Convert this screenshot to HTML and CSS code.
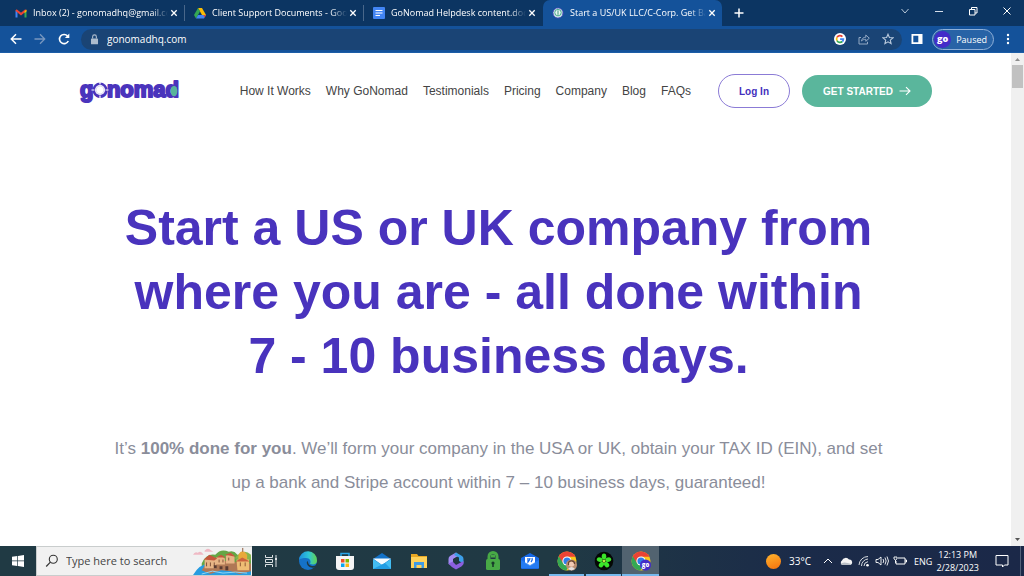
FILE: index.html
```html
<!DOCTYPE html>
<html lang="en">
<head>
<meta charset="utf-8">
<title>Start a US/UK LLC/C-Corp. Get Banking</title>
<link rel="stylesheet" href="styles.css">
</head>
<body>
<svg class="defs" aria-hidden="true">
  <defs>
    <symbol id="chrome" viewBox="0 0 20 20">
      <circle cx="10" cy="10" r="9.5" fill="#fbc91c"/>
      <path d="M10 10 1.8 5.2A9.5 9.5 0 0 0 9.3 19.5L13.5 12Z" fill="#34a853"/>
      <path d="M1.8 5.2A9.5 9.5 0 0 1 18.5 5.7H10L6 12Z" fill="#ea4335"/>
      <circle cx="10" cy="10" r="4.6" fill="#fff"/><circle cx="10" cy="10" r="3.6" fill="#2f7de9"/>
    </symbol>
    <symbol id="x" viewBox="0 0 8 8"><path d="M1.3 1.3 6.7 6.7M6.7 1.3 1.3 6.7" stroke="#fff" stroke-width="1.3"/></symbol>
  </defs>
</svg>

<header class="browser">
  <div class="tabstrip">
    <div class="tab">
      <svg class="fav" viewBox="0 0 12 12"><path d="M1.500 10.500V3.500" stroke="#4285f4" stroke-width="2"/><path d="M10.500 10.500V3.500" stroke="#34a853" stroke-width="2"/><path d="M1 3 6 7 11 3" fill="none" stroke="#ea4335" stroke-width="2.200"/><path d="M9.500 4.200 11.500 2.500V4.500L9.500 6.200Z" fill="#fbbc04"/></svg>
      <span class="title">Inbox (2) - gonomadhq@gmail.com</span>
      <button class="close" aria-label="Close tab"><svg viewBox="0 0 8 8"><use href="#x"/></svg></button>
    </div>
    <div class="tab">
      <svg class="fav" viewBox="0 0 12 12"><path d="M4 1H8L12 8H8Z" fill="#fbbc04"/><path d="M4 1 0 8 2 11.4 6 4.5Z" fill="#34a853"/><path d="M4 8H12L10 11.4H2Z" fill="#4285f4"/><path d="M9.4 8H12L10.6 10.4Z" fill="#ea4335"/></svg>
      <span class="title">Client Support Documents - Google</span>
      <button class="close" aria-label="Close tab"><svg viewBox="0 0 8 8"><use href="#x"/></svg></button>
    </div>
    <div class="tab">
      <svg class="fav" viewBox="0 0 12 12"><rect width="12" height="12" rx="1" fill="#4285f4"/><path d="M2.5 3.5H9.5M2.5 6H9.5M2.5 8.5H7" stroke="#fff" stroke-width="1.2"/></svg>
      <span class="title">GoNomad Helpdesk content.docx</span>
      <button class="close" aria-label="Close tab"><svg viewBox="0 0 8 8"><use href="#x"/></svg></button>
    </div>
    <div class="tab active">
      <svg class="fav" viewBox="0 0 12 12"><circle cx="6" cy="6" r="5" fill="#c8e6e4" stroke="#5444c0" stroke-dasharray="2 .7"/><circle cx="6" cy="5.6" r="3.2" fill="#e9f8f3" stroke="#52ac91"/><path d="M6 3.4V7.8" stroke="#3d947a"/></svg>
      <span class="title">Start a US/UK LLC/C-Corp. Get Banking</span>
      <button class="close" aria-label="Close tab"><svg viewBox="0 0 8 8"><use href="#x"/></svg></button>
    </div>
    <button class="newtab" aria-label="New tab"><svg viewBox="0 0 10 10"><path d="M5 .5V9.5M.5 5H9.5" stroke="#fff" stroke-width="1.5"/></svg></button>
    <div class="winctl">
      <button aria-label="Search tabs"><svg viewBox="0 0 10 10"><path d="M1.5 3 5 7 8.5 3" fill="none" stroke="#b8c8d8"/></svg></button>
      <button aria-label="Minimize"><svg viewBox="0 0 10 10"><path d="M1 5.5H9" stroke="#d5deea"/></svg></button>
      <button aria-label="Restore"><svg viewBox="0 0 10 10"><path d="M1.5 3.5H7V9H1.5ZM3.5 3.5V1.5H9V7H7" fill="none" stroke="#fff"/></svg></button>
      <button aria-label="Close"><svg viewBox="0 0 10 10"><path d="M1.5 1.5 8.5 8.5M8.5 1.5 1.5 8.5" stroke="#fff"/></svg></button>
    </div>
  </div>
  <div class="toolbar">
    <button class="nav-btn" aria-label="Back"><svg viewBox="0 0 12 12"><path d="M11.5 6H1.5M6 1.3 1.3 6 6 10.7" fill="none" stroke="#fff" stroke-width="1.5"/></svg></button>
    <button class="nav-btn" aria-label="Forward"><svg viewBox="0 0 12 12"><path d="M.5 6H10.5M6 1.3 10.7 6 6 10.7" fill="none" stroke="#7897bf" stroke-width="1.3"/></svg></button>
    <button class="nav-btn" aria-label="Reload"><svg viewBox="0 0 12 12"><path d="M10.3 8A4.6 4.6 0 1 1 9.5 2.9" fill="none" stroke="#fff" stroke-width="1.6"/><path d="M11.3.6V5H6.9Z" fill="#fff"/></svg></button>
    <div class="omnibox">
      <svg class="lock" viewBox="0 0 8 10"><rect x=".8" y="4" width="6.4" height="5.4" rx=".6" fill="#aebccc"/><path d="M2.3 4V2.5A1.7 1.7 0 0 1 5.7 2.5V4" fill="none" stroke="#aebccc"/></svg>
      <input class="url" type="text" value="gonomadhq.com" aria-label="Address">
      <button aria-label="Google"><svg viewBox="0 0 12 12"><circle cx="6" cy="6" r="6" fill="#fff"/><g fill="none" stroke-width="1.7"><path d="M8.4 3.6A3.4 3.4 0 0 0 3 4.4" stroke="#ea4335"/><path d="M3 4.4A3.4 3.4 0 0 0 3 7.6" stroke="#fbbc04"/><path d="M3 7.6A3.4 3.4 0 0 0 8.3 8.5" stroke="#34a853"/><path d="M8.3 8.5A3.4 3.4 0 0 0 9.4 6.1H6.1" stroke="#4285f4"/></g></svg></button>
      <button aria-label="Share"><svg viewBox="0 0 12 12"><path d="M3 4.5H1V11H9.5V8.8M3.5 8C4 5.5 5.5 4.2 7.8 4.2V2L11.3 5.2 7.8 8.3V6.3C6 6.3 4.5 6.8 3.5 8Z" fill="none" stroke="#93a9c4" stroke-width="1"/></svg></button>
      <button aria-label="Bookmark"><svg viewBox="0 0 12 12"><path d="M6 1.2 7.4 4.5 11 4.8 8.3 7.2 9.1 10.7 6 8.8 2.9 10.7 3.7 7.2 1 4.8 4.6 4.5Z" fill="none" stroke="#b9c9dc" stroke-width="1.1"/></svg></button>
    </div>
    <button class="side" aria-label="Side panel"><svg viewBox="0 0 12 12"><path d="M.5 1H11.5V11H.5ZM2.3 2.8V9.2H7.3V2.8Z" fill="#fff" fill-rule="evenodd"/></svg></button>
    <button class="profile"><span class="avatar">go</span>Paused</button>
    <button class="more" aria-label="Menu"><svg viewBox="0 0 4 12"><circle cx="2" cy="2" r="1.2" fill="#fff"/><circle cx="2" cy="6" r="1.2" fill="#fff"/><circle cx="2" cy="10" r="1.2" fill="#fff"/></svg></button>
  </div>
</header>

<div class="viewport">
  <main class="page">
    <div class="site-head">
      <a class="logo" href="#" aria-label="gonomad">
        <svg viewBox="0 0 104 36"><text class="logo-text" x="1" y="24">gonomad</text><circle cx="21" cy="17" r="7.500" fill="#4a34bc"/><circle cx="21" cy="17" r="5" fill="#fff"/><circle cx="21" cy="17" r="4" fill="none" stroke="#c9c2ec" stroke-width=".6"/><path d="M21 8.500V11.500M21 22.500V25.500M12.500 17H15.500M26.500 17H29.500" stroke="#fff" stroke-width="1.200"/><ellipse cx="95" cy="18" rx="3.400" ry="5.200" fill="#57b49b"/></svg>
      </a>
      <nav class="menu">
        <a href="#">How It Works</a><a href="#">Why GoNomad</a><a href="#">Testimonials</a><a href="#">Pricing</a><a href="#">Company</a><a href="#">Blog</a><a href="#">FAQs</a>
      </nav>
      <a class="btn login" href="#">Log In</a>
      <a class="btn start" href="#">GET STARTED <svg viewBox="0 0 12 10"><path d="M.5 5H11M7 1.200 11 5 7 8.800" fill="none" stroke="#fff" stroke-width="1.100"/></svg></a>
    </div>
    <section class="hero">
      <h1>Start a US or UK company from<br>where you are - all done within<br>7 - 10 business days.</h1>
      <p>It’s <strong>100% done for you</strong>. We’ll form your company in the USA or UK, obtain your TAX ID (EIN), and set<br>up a bank and Stripe account within 7 – 10 business days, guaranteed!</p>
    </section>
  </main>
  <div class="scrollbar" aria-hidden="true">
    <svg viewBox="0 0 13 12"><path d="M4 8H9L6.500 5Z" fill="#8d8d8d"/></svg>
    <div class="thumb"></div>
    <svg viewBox="0 0 13 12"><path d="M4 4H9L6.500 7Z" fill="#555"/></svg>
  </div>
</div>

<footer class="taskbar">
  <button class="start-menu" aria-label="Start"><svg viewBox="0 0 12 12"><path d="M0 1.700 5.300 1V5.600H0ZM6 .9 12 0V5.600H6ZM0 6.300H5.300V11L0 10.300ZM6 6.300H12V12L6 11.100Z" fill="#fff"/></svg></button>
  <label class="search">
    <svg class="glass" viewBox="0 0 14 14"><circle cx="8.300" cy="5.300" r="4" fill="none" stroke="#333" stroke-width="1.100"/><path d="M5.400 8.200 1.200 12.500" stroke="#333" stroke-width="1.200"/></svg>
    <input type="text" placeholder="Type here to search" aria-label="Type here to search">
    <svg class="scene" viewBox="0 0 60 29">
      <path d="M0 8Q2 4 5 6Q8 3 11 8ZM12 4Q15 0 18 3L21 5H12Z" fill="#efb9c4"/>
      <path d="M9 17Q14 6 23 8Q29 1 37 5Q42 3 46 8L60 10V25H9Z" fill="#65a646"/>
      <path d="M43 12Q52 0 60 8V14Z" fill="#86b64d"/>
      <path d="M0 29Q8 16 18 18L36 20 60 24V29Z" fill="#279ce0"/>
      <path d="M9 24 15 15 24 17 29 14 47 16 60 17V25L48 28 39 25 29 24 18 28Z" fill="#b07855"/>
      <path d="M12 13 17 9 24 12V22H12ZM24 11 29 9 33 12V18H24ZM34 9 40 7 43 10V17H34Z" fill="#e8b586"/>
      <path d="M11 13 17 8 25 12 22 14ZM24 11 29 8 34 11ZM33 8 39 6 44 10Z" fill="#c5563d"/>
      <path d="M14 16V20M18 16V20M22 16V20M27 13V16M31 13V16M37 11V14" stroke="#805038"/>
      <path d="M23 22V19M29 23V20M35 24V20" stroke="#593a32" stroke-width="3"/>
      <path d="M45 13H58V24L46 24Z" fill="#eebd74"/><path d="M47 8Q51 1 56 8V13H47Z" fill="#e8a93b"/><path d="M44 15 51 11 59 15Z" fill="#cb623f"/><path d="M51.500 1V5M49 20V16M54 20V16" stroke="#8c5636"/>
      <path d="M9 28 20 25 31 27 44 26 56 27" stroke="#8fd7f6" fill="none"/>
    </svg>
  </label>
  <div class="apps">
    <button aria-label="Task view"><svg viewBox="0 0 20 20"><path d="M4.500 4V6.500H11.500V4M4.500 16V13.500H11.500V16M4.500 8.500H11.500V11.500H4.500ZM15 4V16" fill="none" stroke="#dbe0e3"/><path d="M14 7H16V9H14Z" fill="#dbe0e3"/></svg></button>
    <button aria-label="Edge"><svg viewBox="0 0 20 20"><defs><linearGradient id="eg" x2="1"><stop stop-color="#1d8de0"/><stop offset=".55" stop-color="#2fc7d5"/><stop offset="1" stop-color="#64d34c"/></linearGradient></defs><circle cx="10" cy="10" r="9" fill="#1572c8"/><path d="M1 9A9 9 0 0 1 19 9.500C19 13 15.500 14.500 12 12.700C13.500 10.500 12 7 8 7 5 7 2 7.500 1 9Z" fill="url(#eg)"/><path d="M10 10C9.500 14 14 16 17.800 14.500L19 12.500 20 16 17 16.200C13 18 8.500 15 8.800 11Z" fill="#203944"/></svg></button>
    <button aria-label="Store"><svg viewBox="0 0 20 20"><path d="M6 6V2.500H14V6" fill="none" stroke="#2aa5e8" stroke-width="1.500"/><path d="M1 5H19V16Q19 19 16 19H4Q1 19 1 16Z" fill="#f5f5f5"/><path d="M6 8H9.500V11.500H6Z" fill="#ef5027"/><path d="M10.500 8H14V11.500H10.500Z" fill="#7db900"/><path d="M6 12.500H9.500V16H6Z" fill="#0aa5ef"/><path d="M10.500 12.500H14V16H10.500Z" fill="#fcb712"/></svg></button>
    <button aria-label="Mail"><svg viewBox="0 0 20 20"><path d="M1 8 10 2 19 8V18H1Z" fill="#1372c8"/><path d="M1 7.500H19L10 14Z" fill="#f4fbff"/><path d="M1 8 10 14 19 8V18H1Z" fill="#43bdf2"/><path d="M1 18 13 12 19 18Z" fill="#219de4"/></svg></button>
    <button aria-label="File Explorer"><svg viewBox="0 0 20 20"><path d="M2 3H8L9.500 5H18V17H2Z" fill="#e9a823"/><path d="M2 6H18V17H2Z" fill="#ffd25a"/><path d="M5 17V11H15V17H12.500V14H7.500V17Z" fill="#3e9be5"/></svg></button>
    <button aria-label="Microsoft 365"><svg viewBox="0 0 20 20"><path d="M10 1.500 4 5Q2.500 6 2.500 8V13L7 15.500V8L13 4.500Z" fill="#a18bf2"/><path d="M10 1.500 16 5Q17.500 6 17.500 8V12.500L13 10V6.500L8 4Z" fill="#3c9fe8"/><path d="M2.500 12.500 7 10.500 10 14 17.500 10V13Q17 15 10 18.500 5 16 2.500 12.500Z" fill="#8b5fdf"/><path d="M7.500 8 10 6.500 12.800 8V11L10 13 7.500 11.500Z" fill="#203840"/></svg></button>
    <button aria-label="Lock"><svg viewBox="0 0 20 20"><path d="M6 9V5.500A4 4 0 0 1 14 5.500V9" fill="none" stroke="#48aa46" stroke-width="3"/><rect x="3" y="8" width="14" height="11" rx="1.500" fill="#48aa46"/><path d="M8 5H12" stroke="#48aa46" stroke-width="3"/><circle cx="10" cy="12" r="1.600" fill="#183b2b"/><path d="M10 12V16" stroke="#183b2b" stroke-width="1.600"/></svg></button>
    <button aria-label="Mail client"><svg viewBox="0 0 20 20"><path d="M1 7 10 2 19 7V17Q19 18 18 18H2Q1 18 1 17Z" fill="#1769e6"/><path d="M5 6H15V12L10 15 5 12Z" fill="#fff"/><path d="M8 7V11Q10 9 10 7M11 11Q13 9 12 7" fill="none" stroke="#1769e6" stroke-width="1.300"/><path d="M1 9 10 14 19 9V17H1Z" fill="#2a82f4" opacity=".75"/></svg></button>
    <button class="open" aria-label="Chrome"><svg viewBox="0 0 20 20"><use href="#chrome"/><circle cx="14.500" cy="14" r="5.500" fill="#b88d70"/><circle cx="14.500" cy="13" r="2.700" fill="#f2cbb4"/><path d="M11 18Q14.500 14 18 18L14.500 19.500Z" fill="#e4e0df"/><path d="M11.500 14Q11 9.500 15 9.800 18 10.500 17.500 13" fill="none" stroke="#68452f" stroke-width="1.200"/></svg></button>
    <button class="open" aria-label="ICQ"><svg viewBox="0 0 20 20"><circle cx="10" cy="10" r="9.300" fill="#050805"/><g fill="#3be52a"><ellipse cx="10" cy="5.500" rx="2.300" ry="3"/><ellipse cx="10" cy="5.500" rx="2.300" ry="3" transform="rotate(72 10 10)"/><ellipse cx="10" cy="5.500" rx="2.300" ry="3" transform="rotate(144 10 10)"/><ellipse cx="10" cy="5.500" rx="2.300" ry="3" transform="rotate(216 10 10)"/><ellipse cx="10" cy="5.500" rx="2.300" ry="3" transform="rotate(288 10 10)"/></g><circle cx="10" cy="10" r="1.500" fill="#b8ed45"/></svg></button>
    <button class="open current" aria-label="Chrome, GoNomad"><svg viewBox="0 0 20 20"><use href="#chrome"/><circle cx="14.500" cy="14" r="5.500" fill="#432cc8"/><text class="badge-text" x="14.500" y="16" text-anchor="middle">go</text></svg></button>
  </div>
  <div class="tray">
    <span class="sun"></span>
    <span class="temp">33°C</span>
    <svg viewBox="0 0 14 14"><path d="M3 9 7 5 11 9" fill="none" stroke="#fff"/></svg>
    <svg viewBox="0 0 14 14"><path d="M3.500 11A2.500 2.500 0 0 1 3 6.500 4 4 0 0 1 10 5.500 2.800 2.800 0 0 1 11 11Z" fill="#f4f4f4"/><path d="M1.500 10Q4 7 12.500 10L11 11H3.500Z" fill="#b9bfc6"/></svg>
    <svg viewBox="0 0 14 14"><g fill="none" stroke="#d6dbe0" stroke-width="1"><path d="M2 11A9 9 0 0 1 11 2.500M4.500 12A7 7 0 0 1 11 5M7 12A4.500 4.500 0 0 1 11 7.700"/></g><circle cx="10.500" cy="11.300" r="1.300" fill="#fff"/></svg>
    <svg viewBox="0 0 14 14"><path d="M1 5.500H3L6 3V11L3 8.500H1ZM8 5Q9.500 7 8 9M10 3.500Q12.300 7 10 10.500M12 2.500Q15 7 12 11.500" fill="none" stroke="#fff" stroke-width=".9"/></svg>
    <svg viewBox="0 0 14 14"><path d="M5 4H12V10H3V7M12 6H13.500V8H12" fill="none" stroke="#fff"/><path d="M1 3V5Q2.500 7 4 5V3ZM2.500 6V9" fill="none" stroke="#fff" stroke-width=".9"/></svg>
    <span class="lang">ENG</span>
    <time class="clock">12:13 PM<br>2/28/2023</time>
    <button class="notes" aria-label="Notifications"><svg viewBox="0 0 14 14"><path d="M1 1.500H13V11H9.500L7.500 13V11H1Z" fill="none" stroke="#fff"/></svg></button>
  </div>
</footer>
</body>
</html>
```
FILE: styles.css
```css
* { box-sizing: border-box; }
body {
  margin: 0;
  height: 100vh;
  display: flex;
  flex-direction: column;
  overflow: hidden;
  background: #fff;
  font-family: "Liberation Sans", Arial, sans-serif;
}
button { border: 0; padding: 0; background: none; font: inherit; color: inherit; display: grid; place-items: center; flex: none; }
input { border: 0; padding: 0; background: none; min-width: 0; }
svg { display: block; flex: none; }
a { text-decoration: none; color: inherit; }
.defs { width: 0; height: 0; position: absolute; }

.browser, .taskbar { font-family: "Open Sans", "Noto Sans", sans-serif; color: #fff; flex: none; }
.tabstrip { display: flex; height: 26px; padding-left: 6px; background: #0c3562; }
.tab { flex: 0 1 179px; min-width: 0; display: flex; align-items: center; padding: 0 6px 0 9px; border-right: 1px solid transparent; border-image: linear-gradient(transparent 20%, #49678a 20%, #49678a 80%, transparent 80%) 1; }
.tab:nth-child(3) { border-image: none; }
.tab.active { background: #14529a; border: 0; border-radius: 7px 7px 0 0; }
.fav { width: 12px; height: 12px; }
.title { flex: 1; margin: 0 2px 0 6px; font-size: 9px; line-height: 14px; white-space: nowrap; overflow: hidden; mask-image: linear-gradient(90deg, #000 88%, transparent); }
.close svg { width: 8px; height: 8px; }
.newtab { width: 34px; }
.newtab svg, .winctl svg { width: 10px; height: 10px; }
.winctl { margin-left: auto; display: flex; padding-bottom: 4px; }
.winctl button { width: 34px; }

.toolbar { display: flex; align-items: center; height: 27px; padding: 0 10px 0 4px; background: #14529a; border-bottom: 1px solid #1c5da7; }
.nav-btn { width: 24px; }
.nav-btn svg { width: 12px; height: 12px; }
.omnibox { flex: 1; min-width: 0; display: flex; align-items: center; height: 21px; margin-left: 5px; padding: 0 2px 0 9px; border-radius: 11px; background: #1a4475; }
.lock { width: 9px; height: 11px; }
.url { flex: 1; margin-left: 8px; color: #fff; font: 10px/16px "Open Sans", "Noto Sans", sans-serif; }
.omnibox button { width: 24px; }
.omnibox button svg, .side svg { width: 12px; height: 12px; }
.side { width: 30px; }
.profile { display: flex; align-items: center; gap: 5px; height: 21px; padding: 0 6px 0 1px; border: 1px solid #8fb0d8; border-radius: 11px; background: #2863a6; font-size: 9px; }
.avatar { display: grid; place-items: center; width: 17px; height: 17px; border-radius: 50%; background: #432cc8; font-weight: 800; font-size: 9px; line-height: 12px; }
.more { width: 12px; margin-left: 8px; }
.more svg { width: 4px; height: 12px; }

.viewport { flex: 1; min-height: 0; display: flex; }
.page { flex: 1; min-width: 0; overflow: hidden; }
.site-head { display: flex; align-items: center; max-width: 853px; margin: 0 auto; padding-top: 20px; }
.logo svg { width: 104px; height: 36px; }
.logo-text { font: bold 22px "Liberation Sans", Arial, sans-serif; fill: #4a34bc; stroke: #4a34bc; stroke-width: 2px; stroke-linejoin: round; }
.menu { display: flex; gap: 15px; margin: 0 27px 0 auto; font-size: 12px; line-height: 16px; color: #444; white-space: nowrap; }
.btn { display: flex; align-items: center; justify-content: center; gap: 6px; height: 32px; border-radius: 17px; font-size: 10px; font-weight: bold; white-space: nowrap; }
.login { width: 72px; height: 34px; border: 1px solid #8b7bd6; color: #4330bd; }
.start { width: 130px; margin-left: 12px; background: #5ab69c; color: #fff; }
.start svg { width: 12px; height: 10px; }
.hero { padding: 87px 24px 0 10px; text-align: center; }
h1 { margin: 0; font-size: 50px; line-height: 64px; color: #4933bd; white-space: nowrap; }
.hero p { margin: 44px 0 0; font-size: 17px; line-height: 34px; color: #8a8d9a; white-space: nowrap; }
.scrollbar { width: 13px; display: flex; flex-direction: column; align-items: center; background: #f0f0f0; }
.scrollbar svg { width: 13px; height: 12px; }
.thumb { width: 11px; height: 23px; margin-bottom: auto; background: #c1c1c1; }

.taskbar { display: flex; height: 30px; background: linear-gradient(90deg, #203a44 0%, #203944 55%, #1b2b49 78%, #1b2848 100%); }
.start-menu { width: 36px; }
.start-menu svg { width: 12px; height: 12px; }
.search { flex: 0 1 216px; min-width: 0; display: flex; align-items: center; padding-left: 8px; background: #f1f1f1; border: 1px solid #c9cdcd; border-right: 0; }
.glass { width: 14px; height: 14px; }
.search input { flex: 1; margin-left: 7px; color: #444; font: 11px/16px "Open Sans", "Noto Sans", sans-serif; }
.search input::placeholder { color: #444; opacity: 1; }
.scene { width: 60px; height: 28px; }
.apps { display: flex; }
.apps button { width: 37px; padding-top: 2px; border-bottom: 2px solid transparent; background-clip: padding-box; }
.apps svg { width: 20px; height: 20px; }
.apps .open { border-image: linear-gradient(90deg, transparent 8%, #76b9ed 8%, #76b9ed 92%, transparent 92%) 2; }
.apps .current { background: #526370; border-image: none; border-color: #76b9ed; }
.badge-text { font: 800 6px "Open Sans", sans-serif; fill: #fff; }
.tray { margin-left: auto; display: flex; align-items: center; gap: 4px; padding-right: 3px; }
.tray svg { width: 14px; height: 14px; }
.sun { width: 15px; height: 15px; border-radius: 50%; background: linear-gradient(160deg, #ffb52e, #f4700d); }
.temp { margin: 0 6px 0 4px; font-size: 10px; }
.lang { margin-left: 3px; font-size: 9px; }
.clock { font-size: 9px; line-height: 13px; text-align: center; }
.notes { align-self: stretch; width: 38px; border-right: 1px solid #53617a; }
```
